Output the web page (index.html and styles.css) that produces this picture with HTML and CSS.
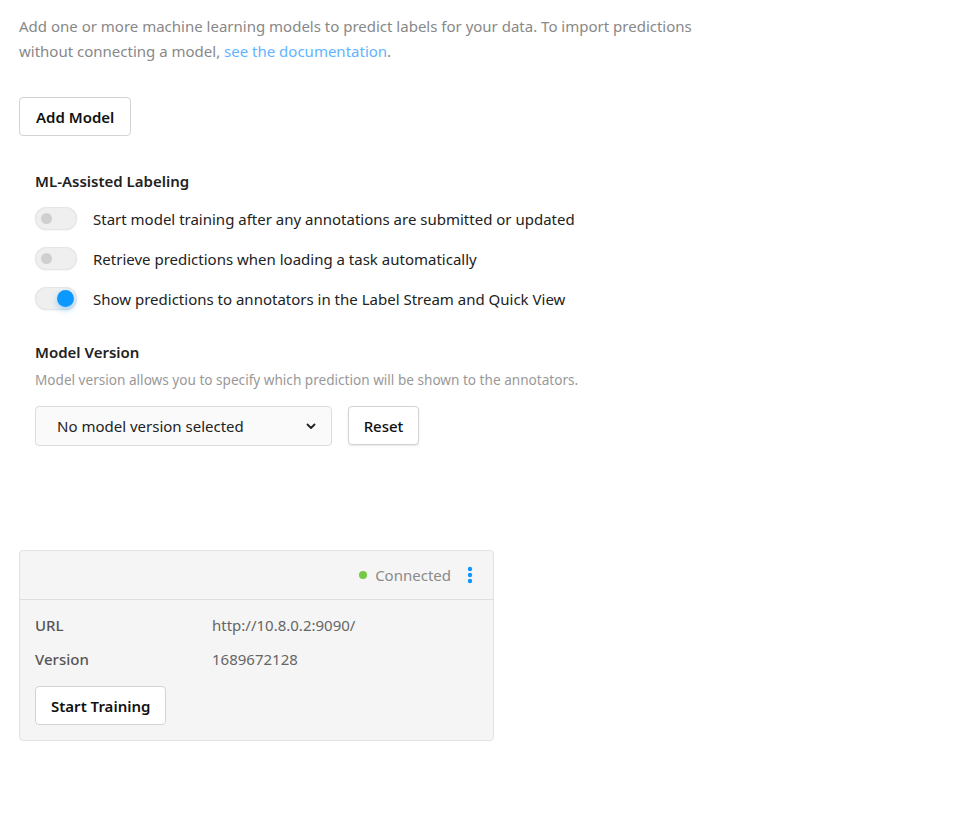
FILE: index.html
```html
<!DOCTYPE html>
<html>
<head>
<meta charset="utf-8">
<link rel="stylesheet" href="styles.css">
</head>
<body>
<div class="page">
  <p class="intro">Add one or more machine learning models to predict labels for your data. To import predictions without connecting a model, <a href="#">see the documentation</a>.</p>
  <button class="btn add-model">Add Model</button>

  <section class="settings">
    <h3 class="section-title">ML-Assisted Labeling</h3>
    <div class="toggles">
      <label class="toggle-row"><span class="toggle"><span class="knob"></span></span><span>Start model training after any annotations are submitted or updated</span></label>
      <label class="toggle-row"><span class="toggle"><span class="knob"></span></span><span>Retrieve predictions when loading a task automatically</span></label>
      <label class="toggle-row"><span class="toggle on"><span class="knob"></span></span><span>Show predictions to annotators in the Label Stream and Quick View</span></label>
    </div>

    <h3 class="section-title version-title">Model Version</h3>
    <p class="hint">Model version allows you to specify which prediction will be shown to the annotators.</p>
    <div class="version-row">
      <div class="select"><span>No model version selected</span>
        <svg class="chev" width="10" height="7" viewBox="0 0 10 7"><path d="M1.5 1.5 L5 5 L8.5 1.5" fill="none" stroke="#222" stroke-width="1.8" stroke-linecap="round" stroke-linejoin="round"/></svg>
      </div>
      <button class="btn">Reset</button>
    </div>
  </section>

  <div class="card">
    <div class="card-header">
      <span class="status"><span class="dot"></span>Connected</span>
      <svg class="menu" width="6" height="18" viewBox="0 0 6 18"><circle cx="3" cy="3" r="2.2" fill="#0b99ff"/><circle cx="3" cy="9" r="2.2" fill="#0b99ff"/><circle cx="3" cy="15" r="2.2" fill="#0b99ff"/></svg>
    </div>
    <div class="card-body">
      <div class="info">
        <span class="label">URL</span><span class="value">http://10.8.0.2:9090/</span>
        <span class="label">Version</span><span class="value">1689672128</span>
      </div>
      <button class="btn">Start Training</button>
    </div>
  </div>
</div>
</body>
</html>
```
FILE: styles.css
```css
* { box-sizing: border-box; }
html, body { margin: 0; padding: 0; background: #fff; }
body {
  font-family: "Segoe UI", "Noto Sans", "Open Sans", sans-serif;
  font-size: 15px;
  color: #1f1f1f;
}
.page { padding: 14px 19px 40px; }
.intro {
  margin: 0;
  max-width: 700px;
  color: #888;
  line-height: 25px;
  font-size: 15px;
}
.intro a { color: #61b4ff; text-decoration: none; }
.btn {
  font-family: inherit;
  font-size: 15px;
  font-weight: 600;
  color: #111;
  background: #fff;
  border: 1px solid #d3d3d3;
  border-radius: 4px;
  height: 39px;
  padding: 0 15px;
  cursor: pointer;
}
.add-model { margin-top: 33px; padding: 0 16px; }
.settings { padding: 0 16px; margin-top: 35px; }
.section-title {
  margin: 0;
  font-size: 15px;
  font-weight: 600;
  color: #222;
  line-height: 20px;
}
.toggles {
  display: flex;
  flex-direction: column;
  gap: 17px;
  margin-top: 16px;
}
.toggle-row { display: flex; align-items: center; gap: 16px; line-height: 22px; color: #222; }
.toggle {
  width: 42px;
  height: 23px;
  border-radius: 12px;
  background: #efefef;
  box-shadow: inset 0 0 0 1px #e4e4e4, 0 1px 2px rgba(0,0,0,0.04);
  position: relative;
  flex: none;
}
.knob {
  position: absolute;
  left: 6px;
  top: 6px;
  width: 11px;
  height: 11px;
  border-radius: 50%;
  background: #cfcfcf;
}
.toggle.on .knob {
  left: 22px;
  top: 3px;
  width: 17px;
  height: 17px;
  background: #0b99ff;
  box-shadow: 0 3px 6px rgba(11,153,255,0.35);
}
.version-title { margin-top: 32px; }
.hint {
  margin: 9px 0 0;
  font-size: 13.6px;
  color: #999;
  line-height: 18px;
}
.version-row { display: flex; gap: 16px; margin-top: 17px; }
.select {
  width: 297px;
  height: 40px;
  border: 1px solid #dcdcdc;
  border-radius: 4px;
  background: #fafafa;
  display: flex;
  align-items: center;
  justify-content: space-between;
  padding: 0 15px 0 21px;
  color: #222;
}
.version-row .btn { width: 71px; padding: 0; font-weight: 500; box-shadow: 0 1px 2px rgba(0,0,0,0.1); }
.card {
  margin-top: 104px;
  width: 475px;
  border: 1px solid #e2e2e2;
  border-radius: 4px;
  background: #f5f5f5;
}
.card-header {
  height: 49px;
  border-bottom: 1px solid #dedede;
  display: flex;
  align-items: center;
  justify-content: flex-end;
  gap: 16px;
  padding: 0 20px;
}
.status { display: flex; align-items: center; gap: 8px; color: #8a8a8a; }
.dot { width: 8px; height: 8px; border-radius: 50%; background: #75c746; }
.card-body { padding: 14px 15px 15px; }
.info {
  display: grid;
  grid-template-columns: 177px 1fr;
  row-gap: 12px;
  line-height: 22px;
}
.label { color: #555; font-weight: 500; }
.value { color: #666; }
.card-body .btn { margin-top: 16px; }
```
